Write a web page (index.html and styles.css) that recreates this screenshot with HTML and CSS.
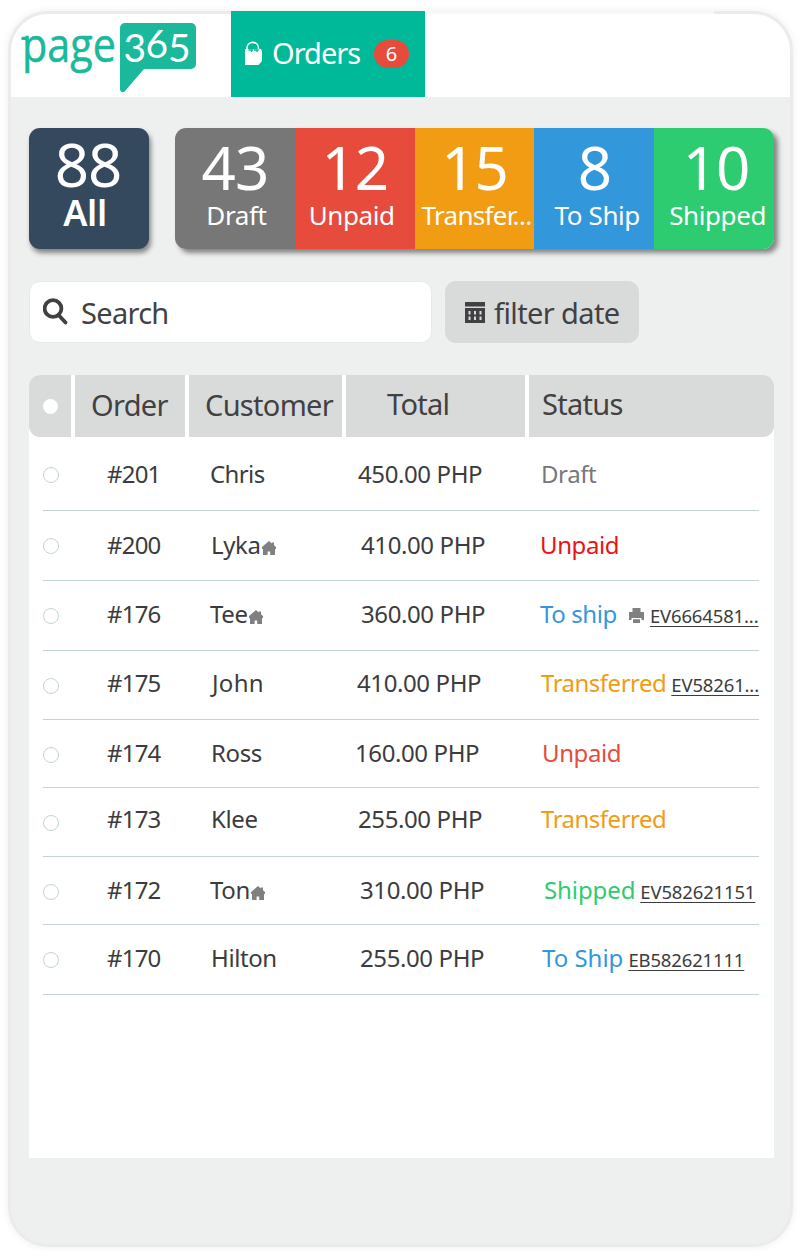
FILE: index.html
```
<!DOCTYPE html>
<html lang="en">
<head>
    <meta charset="UTF-8">
    <meta name="viewport" content="width=device-width, initial-scale=1.0">
    <title>Page365 Orders</title>
    <link rel="stylesheet" href="styles.css">
</head>
<body>
    <svg width="0" height="0" class="sprite">
        <symbol id="home" viewBox="0 0 14 14">
            <path d="M7 0 L0 6 V8 H1 V14 H5.6 V10.5 H8.2 V14 H13 V8 H14 V6 L12 4.2 V1.5 H9.8 V2.4 Z"/>
        </symbol>
    </svg>
    <div class="frame">
        <div class="header">
            <svg class="logo" width="180" height="76" viewBox="0 0 180 76">
                <text class="logo-page" x="2" y="45" textLength="94" lengthAdjust="spacingAndGlyphs">page</text>
                <path class="logo-bubble" d="M2.8 19.8h5v3.2h-5a1.6 1.6 0 0 1 0-3.2z"/>
                <path class="logo-bubble" d="M105 6h66a5 5 0 0 1 5 5v36a5 5 0 0 1-5 5H124L105 74q-3 3-5-1V11a5 5 0 0 1 5-5z"/>
                <text class="logo-num" y="45"><tspan x="103.5">3</tspan><tspan x="125.5" y="40.5">6</tspan><tspan x="148" y="45">5</tspan></text>
            </svg>
            <div class="tab">
                <svg width="18" height="26" viewBox="0 0 18 26">
                    <path fill="#fff" d="M1 8 H17 L18 10 V20 L14.5 24 H1 Z"/>
                    <path fill="none" stroke="#fff" stroke-width="1.6" d="M3 9 V7 C3 -0.5 14.5 -0.5 14.5 7 V9"/>
                    <path fill="none" stroke="#00b998" stroke-width="1.3" d="M4.5 9 H8.5 L7 10.8 M10 9 H14 L12.5 10.8"/>
                </svg>
                <span class="tab-title">Orders</span>
                <span class="badge">6</span>
            </div>
        </div>

        <div class="stats">
            <div class="stat all"><b>88</b><span>All</span></div>
            <div class="stat-group">
                <div class="stat draft"><b>43</b><span>Draft</span></div>
                <div class="stat unpaid"><b>12</b><span>Unpaid</span></div>
                <div class="stat transfer"><b>15</b><span>Transfer...</span></div>
                <div class="stat to-ship"><b>8</b><span>To Ship</span></div>
                <div class="stat shipped"><b>10</b><span>Shipped</span></div>
            </div>
        </div>

        <div class="tools">
            <div class="search">
                <svg width="26" height="28" viewBox="0 0 26 28">
                    <circle cx="10" cy="10.5" r="8.4"/>
                    <path d="M15.5 17 L22.5 24.5"/>
                </svg>
                <span>Search</span>
            </div>
            <div class="filter">
                <svg width="20" height="21" viewBox="0 0 20 21">
                    <path fill="#414143" d="M0 0h20v4.5H0zM0 6h20v15H0z"/>
                    <path fill="#d9dbda" d="M3.5 9h2v3.5h-2zM9 9h2v3.5H9zM14.5 9h2v3.5h-2zM3.5 14.5h2V18h-2zM9 14.5h2V18H9zM14.5 14.5h2V18h-2z"/>
                </svg>
                <span>filter date</span>
            </div>
        </div>

        <div class="orders">
            <div class="thead">
                <div class="th"><i class="dot"></i></div>
                <div class="th order">Order</div>
                <div class="th customer">Customer</div>
                <div class="th total">Total</div>
                <div class="th status">Status</div>
            </div>
            <div class="rows">
                <div class="row">
                    <i class="radio"></i>
                    <div class="id">#201</div>
                    <div class="name">Chris</div>
                    <div class="price">450.00 PHP</div>
                    <div class="state"><span class="gray">Draft</span></div>
                </div>
                <div class="row">
                    <i class="radio"></i>
                    <div class="id">#200</div>
                    <div class="name">Lyka<svg class="home"><use href="#home"/></svg></div>
                    <div class="price">410.00 PHP</div>
                    <div class="state"><span class="bright-red">Unpaid</span></div>
                </div>
                <div class="row">
                    <i class="radio"></i>
                    <div class="id">#176</div>
                    <div class="name">Tee<svg class="home"><use href="#home"/></svg></div>
                    <div class="price">360.00 PHP</div>
                    <div class="state">
                        <span class="blue">To ship</span>
                        <svg class="printer" width="15" height="15" viewBox="0 0 15 15">
                            <path d="M3.5 0h8v4h-8zM0 4h15v8h-2.5v-2h-10v2H0zM4 11.3h7V15H4z"/>
                        </svg>
                        <a class="track">EV6664581...</a>
                    </div>
                </div>
                <div class="row">
                    <i class="radio"></i>
                    <div class="id">#175</div>
                    <div class="name">John</div>
                    <div class="price">410.00 PHP</div>
                    <div class="state"><span class="orange">Transferred</span><a class="track">EV58261...</a></div>
                </div>
                <div class="row">
                    <i class="radio"></i>
                    <div class="id">#174</div>
                    <div class="name">Ross</div>
                    <div class="price">160.00 PHP</div>
                    <div class="state"><span class="red">Unpaid</span></div>
                </div>
                <div class="row">
                    <i class="radio"></i>
                    <div class="id">#173</div>
                    <div class="name">Klee</div>
                    <div class="price">255.00 PHP</div>
                    <div class="state"><span class="orange">Transferred</span></div>
                </div>
                <div class="row">
                    <i class="radio"></i>
                    <div class="id">#172</div>
                    <div class="name">Ton<svg class="home"><use href="#home"/></svg></div>
                    <div class="price">310.00 PHP</div>
                    <div class="state"><span class="green">Shipped</span><a class="track">EV582621151</a></div>
                </div>
                <div class="row">
                    <i class="radio"></i>
                    <div class="id">#170</div>
                    <div class="name">Hilton</div>
                    <div class="price">255.00 PHP</div>
                    <div class="state"><span class="blue">To Ship</span><a class="track">EB582621111</a></div>
                </div>
            </div>
        </div>
    </div>
</body>
</html>
```
FILE: styles.css
```
* {
    box-sizing: border-box;
}
body {
    font-family: 'Noto Sans', sans-serif;
    margin: 0;
    padding: 11px 0 0 8px;
    height: 1258px;
    background: #fff;
    color: #414143;
    overflow: hidden;
}
.sprite {
    position: absolute;
}
.frame {
    width: 785px;
    height: 1236px;
    background: #eef0ef;
    border: 3px solid #ebebeb;
    border-radius: 40px;
    box-shadow: 0 0 9px rgba(0, 0, 0, 0.07);
}

/* header */
.header {
    position: relative;
    display: flex;
    height: 83px;
    background: #fff;
    border-radius: 37px 37px 0 0;
}
.header::after {
    content: '';
    position: absolute;
    top: -3px;
    left: 414px;
    width: 289px;
    height: 3px;
    background: #f8f8f8;
}
.logo {
    width: 180px;
    height: 76px;
    margin: 3px 31px 0 9px;
    overflow: visible;
}
.logo-page {
    font: 47px 'Open Sans', sans-serif;
    fill: #1ab99b;
    stroke: #1ab99b;
    stroke-width: 0.5;
}
.logo-bubble {
    fill: #1ab99b;
}
.logo-num {
    font: 39px Lato, sans-serif;
    fill: #fff;
}
.tab {
    display: flex;
    align-items: center;
    width: 194px;
    height: 86px;
    margin-top: -3px;
    padding-left: 13px;
    background: #00b998;
    color: #fff;
}
.tab-title {
    margin-left: 10px;
    width: 88px;
    padding-bottom: 3px;
    font-size: 29px;
    letter-spacing: -1px;
}
.badge {
    width: 35px;
    height: 28px;
    margin-left: 14px;
    border-radius: 14px;
    background: #e64b3c;
    font-size: 20px;
    line-height: 27px;
    text-align: center;
}

/* counters */
.stats {
    display: flex;
    gap: 26px;
    padding: 31px 0 0 18px;
}
.stat {
    flex: 1;
    height: 121px;
    padding-top: 9px;
    color: #fff;
    text-align: center;
    white-space: nowrap;
}
.stat b, .stat span {
    display: block;
}
.stat b {
    font-weight: 400;
    font-size: 60px;
    line-height: 61px;
    letter-spacing: -1px;
}
.stat span {
    font-size: 26px;
    line-height: 34px;
    letter-spacing: -0.4px;
}
.all {
    flex: none;
    width: 120px;
    padding-top: 6px;
    border-radius: 11px;
    background: #34495e;
    box-shadow: 2px 4px 5px rgba(0, 0, 0, 0.45);
}
.all b {
    padding-right: 2px;
}
.all span {
    padding-right: 8px;
    font-weight: 600;
    font-size: 36px;
    line-height: 36px;
}
.stat-group {
    display: flex;
    width: 599px;
    border-radius: 11px;
    box-shadow: 4px 4px 5px rgba(0, 0, 0, 0.45);
}
.draft {
    background: #777;
    border-radius: 11px 0 0 11px;
}
.draft span {
    padding-left: 3px;
}
.unpaid {
    background: #e64b3c;
}
.unpaid span {
    padding-right: 6px;
}
.transfer {
    background: #f19c13;
}
.transfer span {
    padding-left: 4px;
    letter-spacing: -0.7px;
}
.to-ship {
    background: #3398db;
}
.to-ship span {
    padding-left: 6px;
}
.shipped {
    background: #2ecc70;
    border-radius: 0 11px 11px 0;
}
.shipped b {
    padding-left: 4px;
}
.shipped span {
    padding-left: 7px;
}

/* search and filter */
.tools {
    display: flex;
    gap: 13px;
    padding: 32px 0 0 18px;
    font-size: 29px;
}
.search, .filter {
    display: flex;
    align-items: center;
    height: 62px;
    border-radius: 11px;
}
.search {
    width: 403px;
    padding-left: 13px;
    background: #fff;
    border: 1px solid #e8eaea;
}
.search svg {
    fill: none;
    stroke: #414143;
    stroke-width: 3.8;
    stroke-linecap: round;
}
.search span {
    margin-left: 12px;
    letter-spacing: -0.7px;
}
.filter {
    width: 194px;
    padding-left: 20px;
    background: #d9dbda;
}
.filter span {
    margin-left: 9px;
    letter-spacing: -0.6px;
}

/* orders table */
.orders {
    width: 745px;
    height: 783px;
    margin: 32px 0 0 18px;
    background: linear-gradient(#eef0ef 20px, #fff 20px);
}
.thead {
    display: grid;
    grid-template-columns: 42px 110px 153px 179px 1fr;
    gap: 4px;
    height: 62px;
    background: #fff;
    border-radius: 11px;
    overflow: hidden;
    font-size: 29px;
    line-height: 60px;
    letter-spacing: -0.7px;
}
.th {
    background: #d9dbda;
}
.th.order {
    padding-left: 16px;
}
.th.customer {
    padding-left: 16px;
}
.th.total {
    padding-left: 41px;
    line-height: 57px;
}
.th.status {
    padding-left: 13px;
    line-height: 57px;
}
.dot {
    display: block;
    width: 15px;
    height: 15px;
    margin: 24px 0 0 14px;
    border-radius: 50%;
    background: #fff;
}
.rows {
    padding: 0 15px 0 14px;
    font-size: 24px;
    line-height: 30px;
    letter-spacing: -0.4px;
}
.row {
    display: grid;
    grid-template-columns: 64px 103px 145px 185px 1fr;
    height: 69px;
    padding-top: 18px;
    border-bottom: 1px solid #c3d3d6;
    color: #3c3c3e;
    white-space: nowrap;
}
.row:nth-child(1) { height: 74px; padding-top: 22px; }
.row:nth-child(2) { height: 70px; padding-top: 19px; }
.row:nth-child(3) { height: 70px; }
.row:nth-child(4) { padding-top: 17px; }
.row:nth-child(5) { height: 68px; }
.row:nth-child(6) { padding-top: 16px; }
.row:nth-child(7) { height: 68px; }
.row:nth-child(8) { height: 70px; }
.radio {
    width: 16px;
    height: 16px;
    margin-top: 9px;
    border: 1.5px solid #c3d3d6;
    border-radius: 50%;
}
.row:nth-child(1) .radio { margin-top: 8px; }
.row:nth-child(2) .radio { margin-top: 8px; }
.row:nth-child(4) .radio { margin-top: 10px; }
.row:nth-child(6) .radio { margin-top: 11px; }
.id {
    letter-spacing: -0.8px;
}
.name {
    padding-left: 1px;
}
.row:nth-child(1) .name {
    padding-left: 0;
    letter-spacing: -0.6px;
}
.row:nth-child(3) .name,
.row:nth-child(7) .name {
    padding-left: 0;
}
.row:nth-child(4) .name {
    padding-left: 2px;
    letter-spacing: 0.3px;
}
.price {
    padding-left: 3px;
}
.row:nth-child(2) .price { padding-left: 6px; }
.row:nth-child(3) .price { padding-left: 6px; }
.row:nth-child(4) .price { padding-left: 2px; }
.row:nth-child(5) .price { padding-left: 0; }
.row:nth-child(7) .price { padding-left: 5px; }
.row:nth-child(8) .price { padding-left: 5px; }
.home {
    width: 14px;
    height: 14px;
    margin-left: 1px;
    vertical-align: -1px;
    fill: #808082;
}
.state {
    display: flex;
    align-items: baseline;
    padding-left: 1px;
}
.row:nth-child(2) .state,
.row:nth-child(3) .state {
    padding-left: 0;
}
.row:nth-child(5) .state {
    padding-left: 2px;
}
.row:nth-child(7) .state {
    padding-left: 4px;
    letter-spacing: -0.1px;
}
.row:nth-child(8) .state {
    padding-left: 2px;
    letter-spacing: 0;
}
.orange {
    letter-spacing: -0.5px;
}
.track {
    margin-left: 5px;
    font-size: 18.5px;
    letter-spacing: -0.15px;
    text-decoration: underline;
    text-decoration-thickness: 1px;
    text-underline-offset: 3px;
}
.printer {
    margin: 9px 1px 0 12px;
    align-self: flex-start;
    fill: #808082;
}
.gray { color: #77787b; }
.bright-red { color: #ee1111; }
.red { color: #e64b3c; }
.blue { color: #3398db; }
.orange { color: #f19c13; }
.green { color: #2ecc70; }
```
